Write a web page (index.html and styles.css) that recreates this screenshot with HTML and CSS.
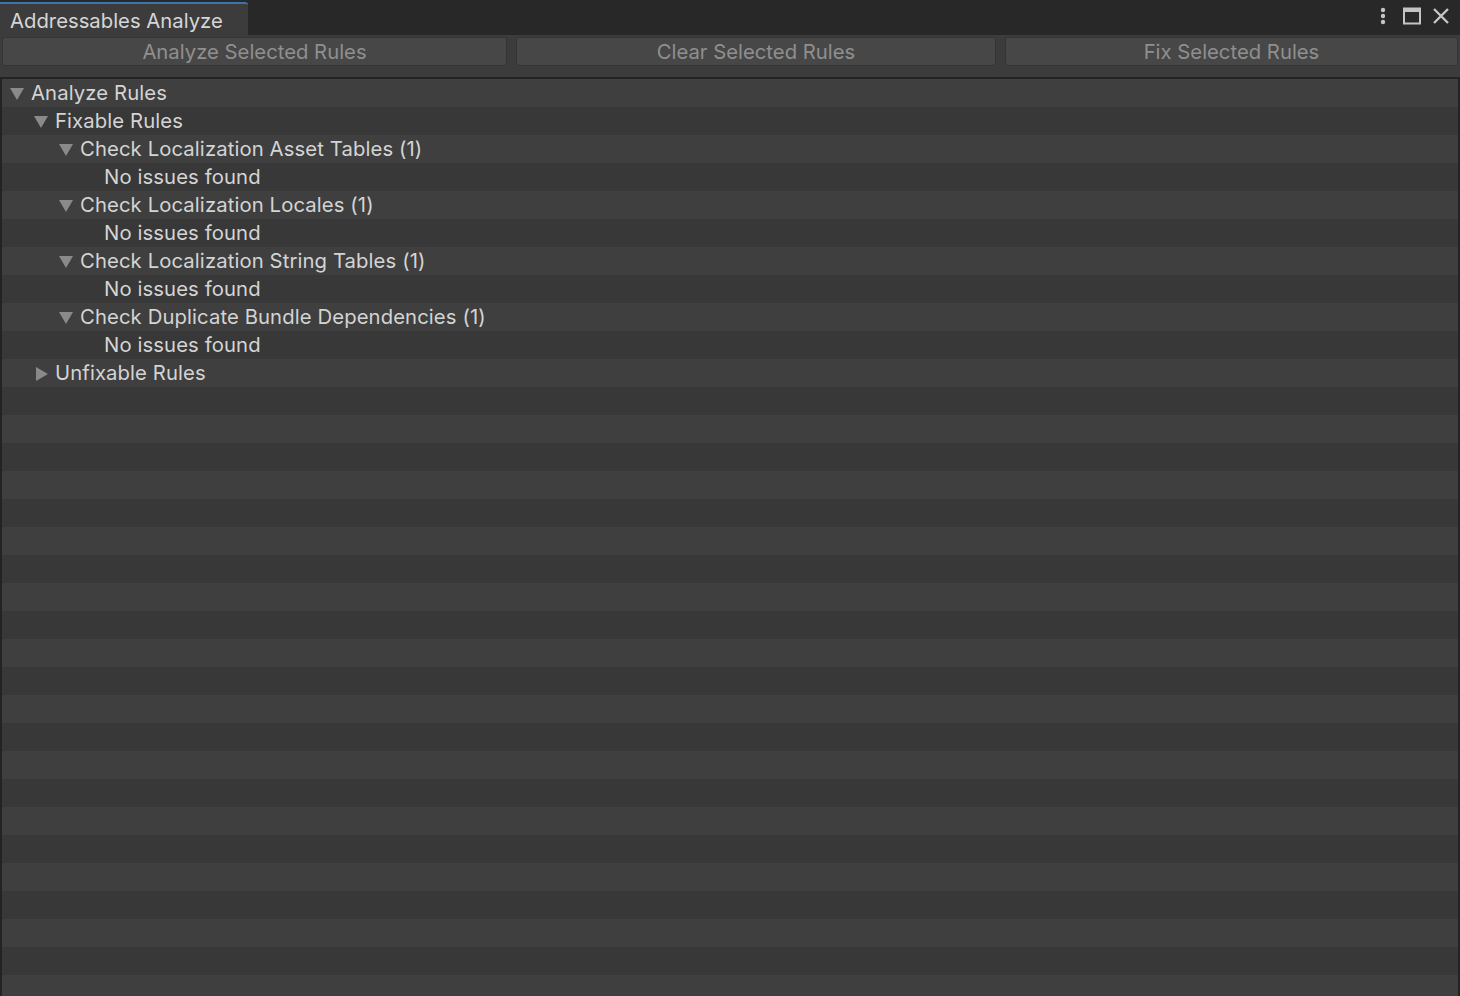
FILE: index.html
```html
<!DOCTYPE html>
<html>
<head>
<meta charset="utf-8">
<link rel="stylesheet" href="styles.css">
</head>
<body>
<div class="window">
  <div class="tabbar">
    <div class="tab">Addressables Analyze</div>
    <div class="tab-icons">
      <svg class="ico kebab" width="10" height="24" viewBox="0 0 10 24"><circle cx="5" cy="6" r="2.2" fill="#c4c4c4"/><circle cx="5" cy="12" r="2.2" fill="#c4c4c4"/><circle cx="5" cy="18" r="2.2" fill="#c4c4c4"/></svg>
      <svg class="ico max" width="20" height="20" viewBox="0 0 20 20"><rect x="2" y="2.5" width="16" height="15" fill="none" stroke="#c4c4c4" stroke-width="2"/><rect x="2" y="2" width="16" height="4" fill="#c4c4c4"/></svg>
      <svg class="ico close" width="18" height="18" viewBox="0 0 18 18"><path d="M2 2L16 16M16 2L2 16" stroke="#c4c4c4" stroke-width="2.4"/></svg>
    </div>
  </div>
  <div class="toolbar">
    <div class="btn b1">Analyze Selected Rules</div>
    <div class="btn b2">Clear Selected Rules</div>
    <div class="btn b3">Fix Selected Rules</div>
  </div>
  <div class="tree">
    <div class="row l0"><span class="tri down"></span>Analyze Rules</div>
    <div class="row l1"><span class="tri down"></span>Fixable Rules</div>
    <div class="row l2"><span class="tri down"></span>Check Localization Asset Tables (1)</div>
    <div class="row l3">No issues found</div>
    <div class="row l2"><span class="tri down"></span>Check Localization Locales (1)</div>
    <div class="row l3">No issues found</div>
    <div class="row l2"><span class="tri down"></span>Check Localization String Tables (1)</div>
    <div class="row l3">No issues found</div>
    <div class="row l2"><span class="tri down"></span>Check Duplicate Bundle Dependencies (1)</div>
    <div class="row l3">No issues found</div>
    <div class="row l1"><span class="tri right"></span>Unfixable Rules</div>
  </div>
</div>
</body>
</html>
```
FILE: styles.css
```css
html, body {
  margin: 0;
  padding: 0;
  background: #282828;
}
body {
  font-family: Inter, "Noto Sans", sans-serif;
  width: 1460px;
  height: 996px;
  overflow: hidden;
}
.window {
  display: flex;
  flex-direction: column;
  height: 996px;
}
.tabbar {
  height: 35px;
  flex: none;
  background: #282828;
  display: flex;
  align-items: flex-end;
  justify-content: space-between;
}
.tab {
  width: 248px;
  height: 33px;
  box-sizing: border-box;
  background: #3c3c3c;
  border-top: 2px solid #3d74ad;
  border-top-right-radius: 3px;
  color: #d6d6d6;
  font-size: 20.3px;
  padding-left: 10px;
  padding-top: 2px;
  line-height: 30px;
}
.tab-icons {
  align-self: flex-start;
  display: flex;
  align-items: center;
  gap: 10px;
  padding: 4px 10px 0 0;
}
.ico { display: block; }
.kebab { margin-right: 4px; }
.toolbar {
  height: 44px;
  flex: none;
  background: #3c3c3c;
  display: flex;
  padding: 2px 2px 0 2px;
  box-sizing: border-box;
  border-bottom: 2px solid #232323;
  gap: 9px;
}
.btn {
  height: 29px;
  background: #474747;
  border: 1px solid #353535;
  border-radius: 3px;
  box-sizing: border-box;
  color: #8f8f8f;
  font-size: 20.3px;
  line-height: 28px;
  text-align: center;
}
.b1 { width: 505px; }
.b2 { width: 480px; }
.b3 { flex: 1; }
.tree {
  flex: 1;
  border-left: 2px solid #232323;
  border-right: 2px solid #232323;
  background: repeating-linear-gradient(to bottom, #3f3f3f 0, #3f3f3f 28px, #383838 28px, #383838 56px);
  color: #d4d4d4;
  font-size: 20.3px;
  letter-spacing: 0.1px;
}
.row {
  height: 28px;
  box-sizing: border-box;
  padding-bottom: 1px;
  display: flex;
  align-items: center;
  white-space: nowrap;
}
.l0 { padding-left: 8px; }
.l1 { padding-left: 32px; }
.l2 { padding-left: 57px; }
.l3 { padding-left: 102px; }
.tri {
  width: 14px;
  height: 14px;
  margin-right: 7px;
  position: relative;
  flex: none;
}
.tri.down::before {
  content: "";
  position: absolute;
  left: 0;
  top: 2px;
  border-left: 7px solid transparent;
  border-right: 7px solid transparent;
  border-top: 12px solid #8a8a8a;
}
.tri.right::before {
  content: "";
  position: absolute;
  left: 2px;
  top: 1px;
  border-top: 7px solid transparent;
  border-bottom: 7px solid transparent;
  border-left: 12px solid #8a8a8a;
}
```
